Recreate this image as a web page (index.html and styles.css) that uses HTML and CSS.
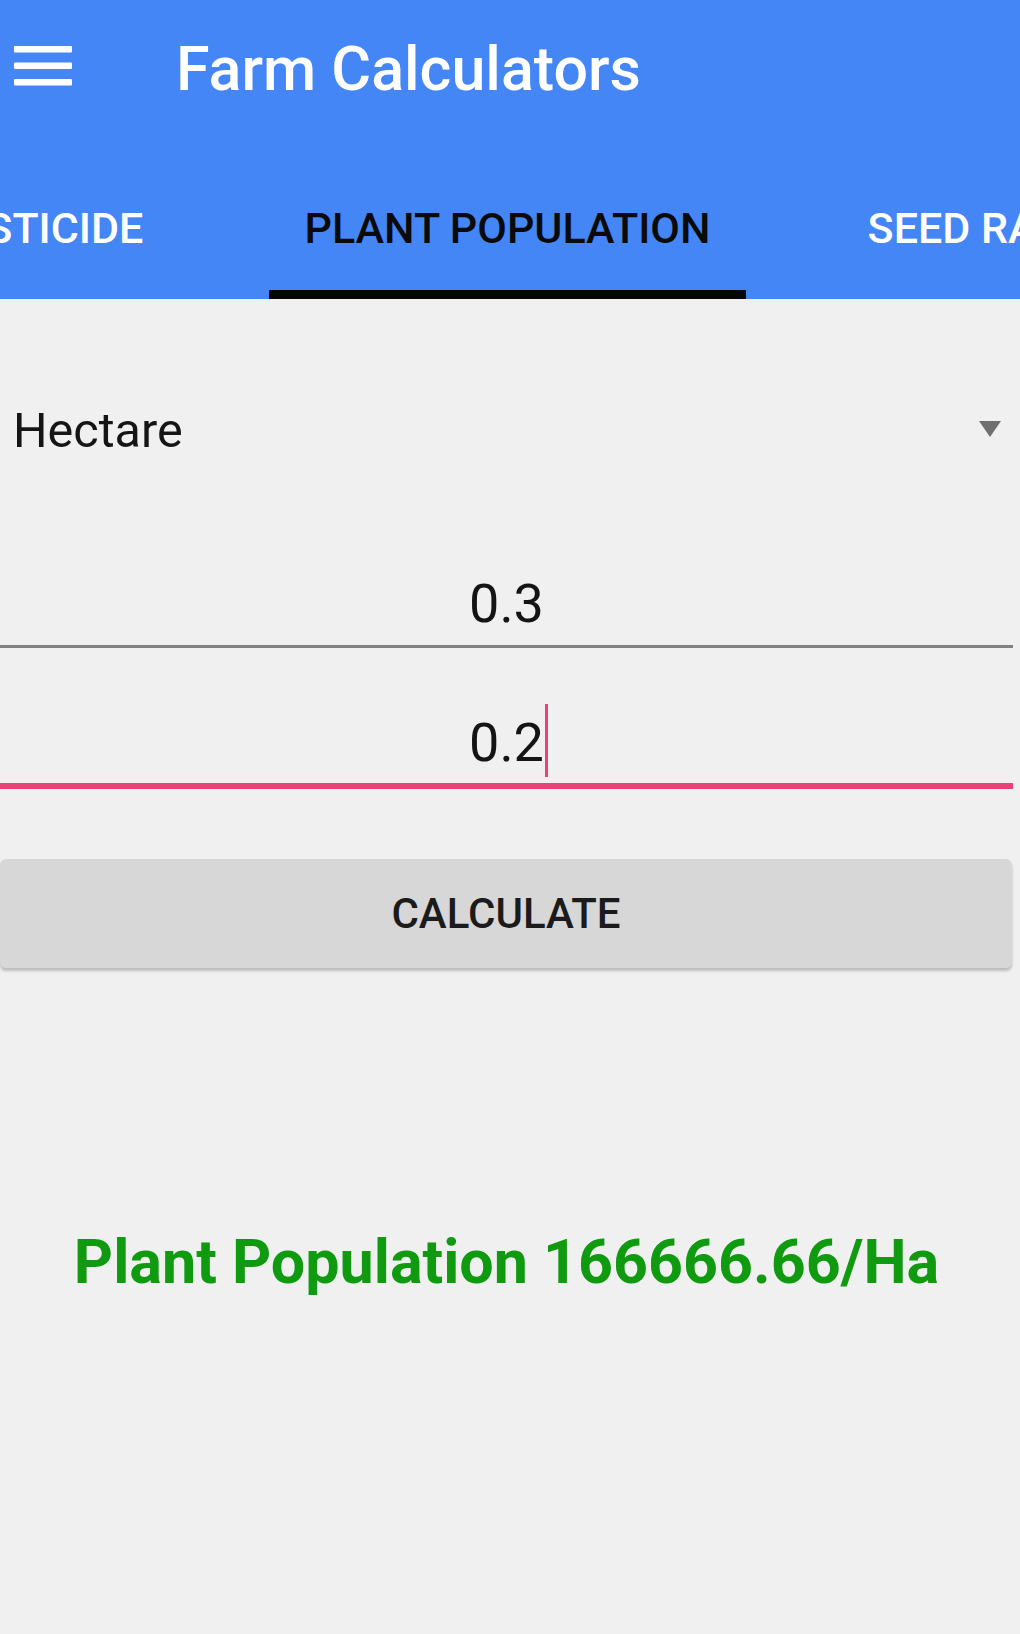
FILE: index.html
```html
<!DOCTYPE html>
<html lang="en">
<head>
<meta charset="utf-8">
<title>Farm Calculators</title>
<link rel="stylesheet" href="styles.css">
</head>
<body>
<header class="appbar">
  <div class="toolbar">
    <svg class="menu-icon" width="58" height="40" viewBox="0 0 58 40" aria-hidden="true">
      <rect x="0" y="0" width="58" height="6.5" rx="1" fill="#ffffff"/>
      <rect x="0" y="16.5" width="58" height="6.5" rx="1" fill="#ffffff"/>
      <rect x="0" y="33" width="58" height="6.5" rx="1" fill="#ffffff"/>
    </svg>
    <h1 class="title">Farm Calculators</h1>
  </div>
  <nav class="tabs">
    <div class="tab-row">
      <div class="tab">PESTICIDE</div>
      <div class="tab tab-active">PLANT POPULATION</div>
      <div class="tab">SEED RATE</div>
    </div>
  </nav>
</header>
<main class="content">
  <div class="spinner">
    <span class="spinner-text">Hectare</span>
    <svg class="spinner-arrow" width="22" height="17" viewBox="0 0 22 17" aria-hidden="true">
      <polygon points="0,0 22,0 11,16" fill="#6f6f6f"/>
    </svg>
  </div>
  <div class="field">
    <span class="field-text">0.3</span>
  </div>
  <div class="field field-focused">
    <span class="field-text">0.2</span><span class="caret"></span>
  </div>
  <button class="calc-btn" type="button">CALCULATE</button>
  <p class="result">Plant Population 166666.66/Ha</p>
</main>
</body>
</html>
```
FILE: styles.css
```css
html, body {
  margin: 0;
  padding: 0;
}
body {
  background: #f0f0f0;
  font-family: Roboto, "Liberation Sans", Arial, sans-serif;
  width: 1020px;
  height: 1634px;
  overflow: hidden;
}
.appbar {
  background: #4486f5;
  height: 299px;
  display: flex;
  flex-direction: column;
  overflow: hidden;
}
.toolbar {
  height: 138px;
  display: flex;
  align-items: flex-start;
  padding-left: 14px;
}
.menu-icon {
  margin-top: 46px;
  flex: none;
}
.title {
  margin: 34px 0 0 104px;
  font-size: 61px;
  line-height: 70px;
  font-weight: 500;
  color: #ffffff;
}
.tabs {
  height: 161px;
  overflow: hidden;
}
.tab-row {
  display: flex;
  margin-left: -191px;
}
.tab {
  flex: none;
  width: 460px;
  height: 161px;
  box-sizing: border-box;
  padding-top: 66px;
  border-bottom: 9px solid transparent;
  text-align: center;
  font-size: 43px;
  line-height: 48px;
  font-weight: 500;
  color: #ffffff;
  white-space: nowrap;
}
.tab-active {
  width: 477px;
  color: #0a0a0a;
  border-bottom-color: #050505;
}
.content {
  width: 1013px;
  display: flex;
  flex-direction: column;
}
.spinner {
  margin-top: 103px;
  display: flex;
  align-items: flex-start;
  justify-content: space-between;
  padding-left: 13px;
  padding-right: 12px;
}
.spinner-text {
  font-size: 48.5px;
  line-height: 58px;
  color: #151515;
}
.spinner-arrow {
  margin-top: 19px;
}
.field {
  margin-top: 112px;
  padding-bottom: 9px;
  border-bottom: 3px solid #818181;
  text-align: center;
  font-size: 54px;
  line-height: 64px;
  color: #141414;
}
.field-focused {
  margin-top: 63px;
  padding-bottom: 8px;
  border-bottom: 6px solid #ec4079;
}
.caret {
  display: inline-block;
  width: 3px;
  height: 73px;
  background: #ec4079;
  margin: -13px -4px -3px 1px;
  vertical-align: -13px;
}
.calc-btn {
  margin-top: 70px;
  height: 109px;
  width: 1012px;
  border: none;
  border-radius: 6px;
  background: #d7d7d7;
  box-shadow: 0 3px 3px rgba(0, 0, 0, 0.22);
  font-family: Roboto, "Liberation Sans", Arial, sans-serif;
  font-size: 42px;
  font-weight: 500;
  color: #1b1b1b;
  padding: 0;
}
.result {
  margin: 258px 0 0 0;
  text-align: center;
  font-size: 61px;
  line-height: 73px;
  font-weight: 700;
  color: #0f9a0f;
}
```
